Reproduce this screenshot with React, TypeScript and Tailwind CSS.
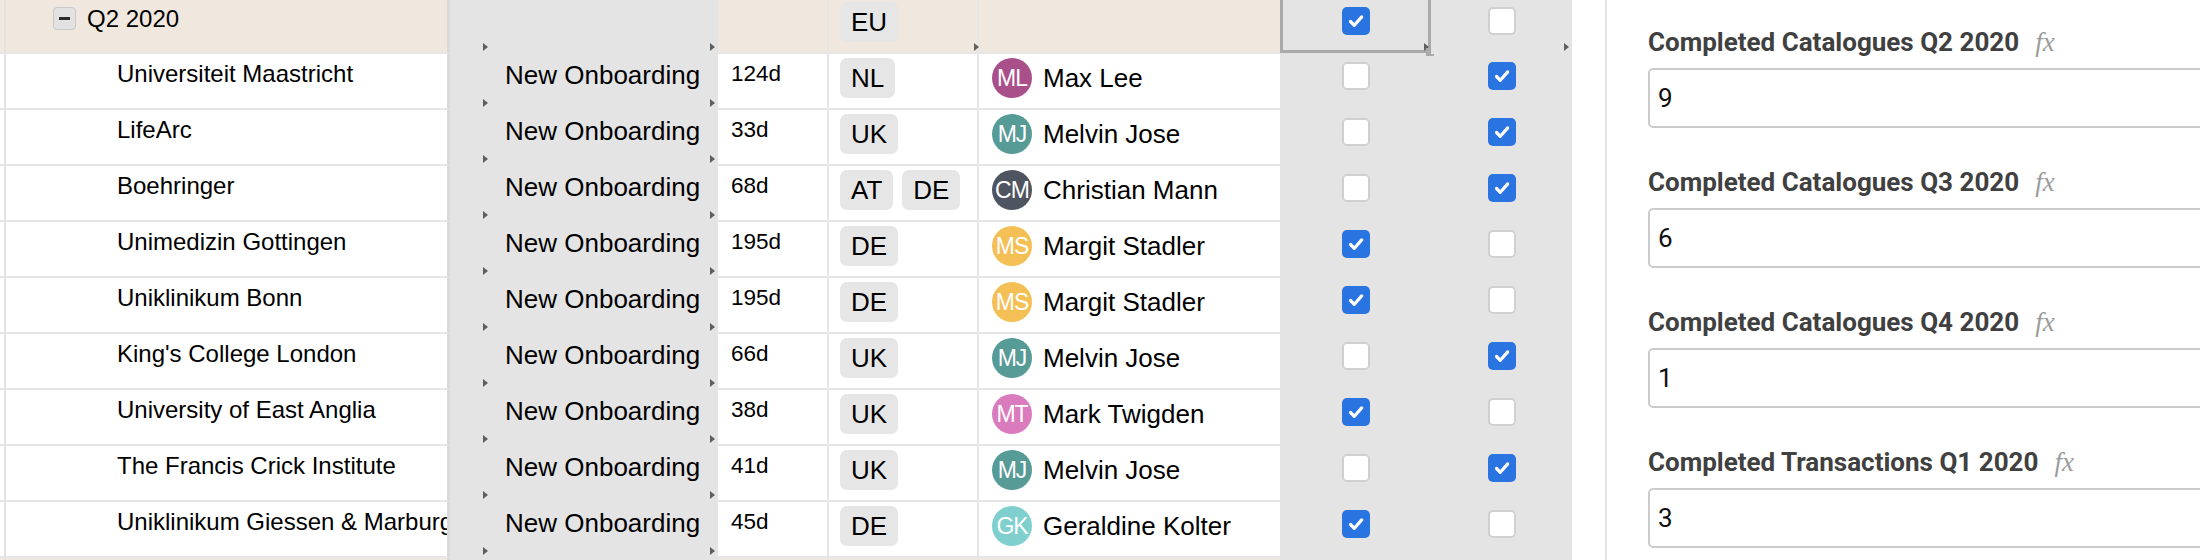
import React from "react";

type Row = {
  name: string;
  days: string;
  tags: string[];
  ini: string;
  who: string;
  color: string;
  a: boolean;
  b: boolean;
};

const rows: Row[] = [
  { name: "Universiteit Maastricht", days: "124d", tags: ["NL"], ini: "ML", who: "Max Lee", color: "#a9508b", a: false, b: true },
  { name: "LifeArc", days: "33d", tags: ["UK"], ini: "MJ", who: "Melvin Jose", color: "#579b97", a: false, b: true },
  { name: "Boehringer", days: "68d", tags: ["AT", "DE"], ini: "CM", who: "Christian Mann", color: "#4e5561", a: false, b: true },
  { name: "Unimedizin Gottingen", days: "195d", tags: ["DE"], ini: "MS", who: "Margit Stadler", color: "#f4bf55", a: true, b: false },
  { name: "Uniklinikum Bonn", days: "195d", tags: ["DE"], ini: "MS", who: "Margit Stadler", color: "#f4bf55", a: true, b: false },
  { name: "King's College London", days: "66d", tags: ["UK"], ini: "MJ", who: "Melvin Jose", color: "#579b97", a: false, b: true },
  { name: "University of East Anglia", days: "38d", tags: ["UK"], ini: "MT", who: "Mark Twigden", color: "#d97bbc", a: true, b: false },
  { name: "The Francis Crick Institute", days: "41d", tags: ["UK"], ini: "MJ", who: "Melvin Jose", color: "#579b97", a: false, b: true },
  { name: "Uniklinikum Giessen & Marburg", days: "45d", tags: ["DE"], ini: "GK", who: "Geraldine Kolter", color: "#80cfcf", a: true, b: false },
];

const fields = [
  { label: "Completed Catalogues Q2 2020", value: "9" },
  { label: "Completed Catalogues Q3 2020", value: "6" },
  { label: "Completed Catalogues Q4 2020", value: "1" },
  { label: "Completed Transactions Q1 2020", value: "3" },
];

function Tri({ className }: { className: string }) {
  return (
    <div
      className={`absolute w-0 h-0 border-y-[4px] border-y-transparent border-l-[5px] border-l-[#5f5f5f] ${className}`}
    />
  );
}

function Check({ on }: { on: boolean }) {
  if (on) {
    return (
      <div className="w-[28px] h-[28px] rounded-[5px] bg-[#2a74e2] flex items-center justify-center">
        <svg width="20" height="20" viewBox="0 0 20 20">
          <path
            d="M4.5 10.5l3.8 3.8 7.4-8.4"
            fill="none"
            stroke="white"
            strokeWidth="3.2"
            strokeLinecap="round"
            strokeLinejoin="round"
          />
        </svg>
      </div>
    );
  }
  return <div className="w-[28px] h-[28px] rounded-[5px] bg-white border-2 border-[#d0d0d0]" />;
}

function Tag({ t }: { t: string }) {
  return (
    <div className="h-[40px] px-[11px] rounded-[7px] bg-[#e6e6e6] flex items-center text-[26px] leading-none">
      {t}
    </div>
  );
}

function GroupRow() {
  return (
    <div className="flex h-[56px] shrink-0 -mt-[2px]">
      <div className="w-[6px] shrink-0 bg-[#f0e8df] border-r-2 border-r-[#e2e2e2] border-b-2 border-b-[#e6e6e6]" />
      <div className="w-[444px] shrink-0 bg-[#f0e8df] border-r-[3px] border-r-[#d9d9d9] border-b-2 border-b-[#e6e6e6] pl-[47px] pt-[9px] flex items-start gap-[11px]">
        <div className="w-[23px] h-[23px] rounded-[4px] bg-[#e2e2e2] border border-[#c9c9c9] flex items-center justify-center">
          <div className="w-[11px] h-[3px] bg-[#2a2a2a]" />
        </div>
        <div className="text-[24px] leading-none whitespace-nowrap">Q2 2020</div>
      </div>
      <div className="relative w-[268px] shrink-0 bg-[#e4e4e4]">
        <Tri className="left-[33px] top-[45px]" />
        <Tri className="left-[260px] top-[45px]" />
      </div>
      <div className="w-[111px] shrink-0 bg-[#f0e8df] border-r-2 border-r-[#e6e6e6] border-b-2 border-b-[#e6e6e6]" />
      <div className="relative w-[150px] shrink-0 bg-[#f0e8df] border-r-2 border-r-[#e6e6e6] border-b-2 border-b-[#e6e6e6] pl-[11px] pt-[4px] flex gap-[9px] items-start">
        <Tag t="EU" />
        <Tri className="left-[145px] top-[45px]" />
      </div>
      <div className="w-[301px] shrink-0 bg-[#f0e8df] border-b-2 border-b-[#e6e6e6]" />
      <div className="relative w-[151px] shrink-0 bg-[#e4e4e4] pt-[9px] flex justify-center items-start">
        <Check on={true} />
        <div className="absolute left-0 right-0 -top-[4px] bottom-[1px] border-[3px] border-[#aaaaaa]" />
        <Tri className="left-[144px] top-[45px]" />
        <div className="absolute -right-[3px] -bottom-[2px] w-[8px] h-[8px] bg-[#aaaaaa]" />
      </div>
      <div className="relative w-[141px] shrink-0 bg-[#e4e4e4] pt-[9px] flex justify-center items-start">
        <Check on={false} />
        <Tri className="left-[133px] top-[45px]" />
      </div>
    </div>
  );
}

function BottomGroupRow() {
  return (
    <div className="flex h-[56px] shrink-0">
      <div className="w-[6px] shrink-0 bg-[#f0e8df] border-r-2 border-r-[#e2e2e2]" />
      <div className="w-[444px] shrink-0 bg-[#f0e8df] border-r-[3px] border-r-[#d9d9d9]" />
      <div className="w-[268px] shrink-0 bg-[#e4e4e4]" />
      <div className="w-[111px] shrink-0 bg-[#f0e8df] border-r-2 border-r-[#e6e6e6]" />
      <div className="w-[150px] shrink-0 bg-[#f0e8df] border-r-2 border-r-[#e6e6e6]" />
      <div className="w-[301px] shrink-0 bg-[#f0e8df]" />
      <div className="w-[151px] shrink-0 bg-[#e4e4e4]" />
      <div className="w-[141px] shrink-0 bg-[#e4e4e4]" />
    </div>
  );
}

function DataRow({ r }: { r: Row }) {
  return (
    <div className="flex h-[56px] shrink-0">
      <div className="w-[6px] shrink-0 bg-white border-r-2 border-r-[#e2e2e2] border-b-2 border-b-[#e6e6e6]" />
      <div className="w-[444px] shrink-0 bg-white border-r-[3px] border-r-[#d9d9d9] border-b-2 border-b-[#e6e6e6] pl-[111px] pt-[8px] overflow-hidden whitespace-nowrap text-[24px] leading-none">
        {r.name}
      </div>
      <div className="relative w-[268px] shrink-0 bg-[#e4e4e4] pl-[55px] pt-[8px] text-[26px] leading-none whitespace-nowrap">
        New Onboarding
        <Tri className="left-[33px] top-[45px]" />
        <Tri className="left-[260px] top-[45px]" />
      </div>
      <div className="w-[111px] shrink-0 bg-white border-r-2 border-r-[#e6e6e6] border-b-2 border-b-[#e6e6e6] pl-[13px] pt-[9px] text-[22.5px] leading-none">
        {r.days}
      </div>
      <div className="w-[150px] shrink-0 bg-white border-r-2 border-r-[#e6e6e6] border-b-2 border-b-[#e6e6e6] pl-[11px] pt-[4px] flex gap-[9px] items-start">
        {r.tags.map((t) => (
          <Tag key={t} t={t} />
        ))}
      </div>
      <div className="w-[301px] shrink-0 bg-white border-b-2 border-b-[#e6e6e6] pl-[13px] pt-[4px]">
        <div className="flex items-center gap-[11px]">
          <div
            className="w-[40px] h-[40px] rounded-full flex items-center justify-center text-white text-[23px] leading-none tracking-[-1px] shrink-0"
            style={{ backgroundColor: r.color }}
          >
            {r.ini}
          </div>
          <div className="text-[26px] leading-none whitespace-nowrap">{r.who}</div>
        </div>
      </div>
      <div className="w-[151px] shrink-0 bg-[#e4e4e4] pt-[8px] flex justify-center items-start">
        <Check on={r.a} />
      </div>
      <div className="w-[141px] shrink-0 bg-[#e4e4e4] pt-[8px] flex justify-center items-start">
        <Check on={r.b} />
      </div>
    </div>
  );
}

export default function App() {
  return (
    <div
      className="flex w-[2200px] h-[560px] overflow-hidden bg-white text-black"
      style={{ fontFamily: '"Liberation Sans", Arial, sans-serif' }}
    >
      <div className="w-[1572px] shrink-0 flex flex-col overflow-hidden">
        <GroupRow />
        {rows.map((r) => (
          <DataRow key={r.name} r={r} />
        ))}
        <BottomGroupRow />
      </div>
      <div className="w-[33px] shrink-0 bg-white" />
      <div
        className="flex-1 min-w-0 overflow-hidden border-l-2 border-l-[#e4e4e4] bg-white pl-[41px] pt-[29px]"
        style={{ fontFamily: 'Roboto, "Liberation Sans", sans-serif' }}
      >
        {fields.map((f) => (
          <div key={f.label} className="h-[140px] flex flex-col">
            <div className="h-[39px] shrink-0 flex items-start gap-[16px] whitespace-nowrap">
              <span className="text-[26px] font-bold leading-none text-[#404040]">{f.label}</span>
              <span
                className="text-[27px] italic leading-none text-[#9c9c9c]"
                style={{ fontFamily: '"Liberation Serif", serif' }}
              >
                fx
              </span>
            </div>
            <div className="h-[60px] shrink-0 w-[640px] border-2 border-[#cccccc] rounded-[5px] pl-[8px] flex items-center text-[26px] text-[#111]">
              {f.value}
            </div>
          </div>
        ))}
      </div>
    </div>
  );
}
